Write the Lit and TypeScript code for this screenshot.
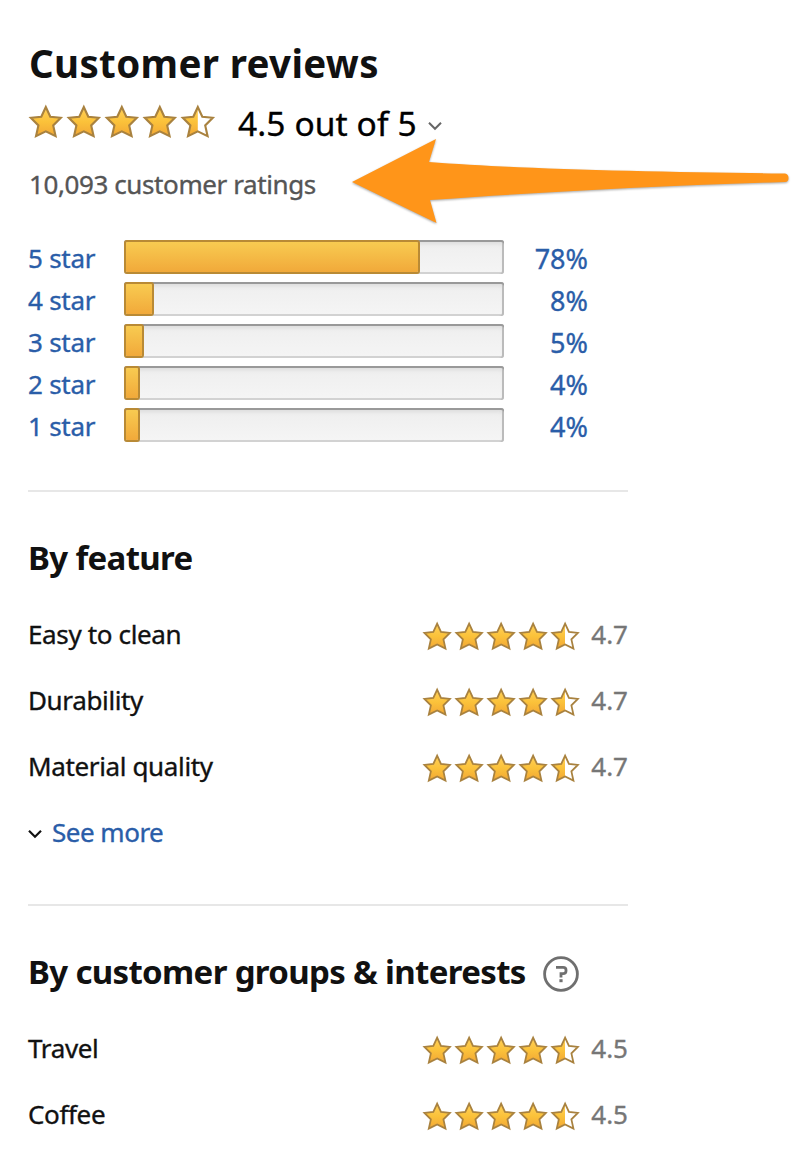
import { LitElement, html, css, svg } from "lit";
import { customElement, property } from "lit/decorators.js";

const STAR = "M17.8 2 L22.3 11.7 L32.8 12.8 L25.2 20.4 L27.6 31.2 L17.8 26.4 L8 31.2 L10.4 20.4 L2.8 12.8 L13.3 11.7 Z";

@customElement("star-rating")
class StarRating extends LitElement {
  @property({ type: Boolean }) large = false;

  static styles = css`
    :host { display: block; }
    svg { display: block; overflow: visible; }
  `;

  render() {
    const pitch = this.large ? 38 : 32;
    const scale = this.large ? 1 : 0.85;
    const size = 34 * scale;
    const width = pitch * 4 + size;
    return html`<svg width=${width} height=${size} viewBox="0 0 ${width} ${size}">
      <defs>
        <linearGradient id="gold" x1="0" y1="0" x2="0" y2="1">
          <stop offset="0" stop-color="#ffd05a" />
          <stop offset="0.5" stop-color="#fbc23a" />
          <stop offset="1" stop-color="#f2a735" />
        </linearGradient>
        <clipPath id="left"><rect x="0" y="0" width="17.8" height="34" /></clipPath>
      </defs>
      ${[0, 1, 2, 3, 4].map(
        (i) => svg`<g transform="translate(${i * pitch} 0) scale(${scale})">
          <path d=${STAR} fill="url(#gold)" clip-path=${i === 4 ? "url(#left)" : "none"} />
          <path d=${STAR} fill="none" stroke="#a9823f" stroke-width="2.1" />
        </g>`
      )}
    </svg>`;
  }
}

@customElement("app-root")
class AppRoot extends LitElement {
  static styles = css`
    :host {
      display: block;
      position: relative;
      height: 1158px;
      overflow: hidden;
      background: #fff;
      color: #111;
      font-family: "Noto Sans", "Open Sans", sans-serif;
      font-size: 26px;
      white-space: nowrap;
      -webkit-text-stroke: 0.35px currentColor;
    }
    .page { box-sizing: border-box; width: 628px; padding: 39px 0 0 28px; }
    h1, h2 { margin: 0; height: 48px; line-height: 48px; font-weight: 700; -webkit-text-stroke: 0; }
    h1 { font-size: 38.5px; letter-spacing: 0.35px; line-height: 49px; padding-left: 1px; }
    h2 { font-size: 33px; letter-spacing: -0.66px; line-height: 49px; }
    .overall { display: flex; align-items: center; height: 72px; }
    .overall star-rating { margin-top: -2px; }
    .score { margin-left: 24px; font-size: 33.5px; letter-spacing: 0.1px; color: #000; }
    .overall .chevron { margin: 5px 0 0 11px; color: #666; }
    .count { height: 48px; line-height: 50px; color: #555; letter-spacing: -0.4px; padding-left: 1px; }
    .histogram { display: grid; gap: 8px; margin-top: 33px; }
    .bar-row {
      display: grid;
      grid-template-columns: 96px 380px 84px;
      height: 34px;
      line-height: 36px;
      color: #2a5da8;
      letter-spacing: -0.25px;
    }
    .percent { text-align: right; letter-spacing: 0; font-size: 27px; line-height: 37px; }
    .track {
      box-sizing: border-box;
      height: 34px;
      border-radius: 3px;
      background: linear-gradient(#eee, #f5f5f5);
      box-shadow: inset 0 2px 0 #999, inset -2px 0 0 #bbb, inset 0 -2px 0 #d2d2d2, inset 0 4px 4px #ddd;
    }
    .fill {
      box-sizing: border-box;
      height: 34px;
      border: 2px solid #b98a35;
      border-radius: 3px;
      background: linear-gradient(#f8cb51, #f1a93a);
      background-clip: padding-box;
    }
    .divider { height: 2px; background: #e7e7e7; }
    .after-bars { margin-top: 48px; }
    .after-list { margin-top: 39px; }
    .section { margin-top: 41px; }
    .groups { display: flex; align-items: center; margin-top: 41px; }
    .help { margin: 6px 0 0 17px; }
    .list { margin-top: 20px; }
    .row { display: flex; align-items: center; height: 66px; line-height: 36px; }
    .label { flex: 1; letter-spacing: -0.36px; }
    .row star-rating { margin-top: 4px; }
    .value { width: 49px; text-align: right; color: #767676; }
    .more { gap: 10px; color: #2a5da8; letter-spacing: -0.5px; }
    .more .chevron { color: #111; margin-top: 4px; }
    svg { display: block; }
    .arrow { position: absolute; left: 340px; top: 130px; filter: drop-shadow(0 1.5px 1px rgba(0, 0, 0, 0.35)); }
  `;

  private chevron(width: number) {
    return html`<svg class="chevron" width="14" height="10" viewBox="0 0 14 10">
      <path d="M1 1.8 L7 7.8 L13 1.8" fill="none" stroke="currentColor" stroke-width=${width} />
    </svg>`;
  }

  private row(label: string, value: string) {
    return html`<div class="row">
      <span class="label">${label}</span><star-rating></star-rating><span class="value">${value}</span>
    </div>`;
  }

  render() {
    const bars = [[5, 78, 296], [4, 8, 30], [3, 5, 20], [2, 4, 16], [1, 4, 16]];
    return html`
      <div class="page">
        <h1><span>Customer reviews</span></h1>
        <div class="overall">
          <star-rating large></star-rating>
          <span class="score">4.5 out of 5</span>
          ${this.chevron(2)}
        </div>
        <div class="count"><span>10,093 customer ratings</span></div>
        <div class="histogram">
          ${bars.map(
            ([stars, percent, width]) => html`<div class="bar-row">
              <span>${stars} star</span>
              <div class="track"><div class="fill" style="width:${width}px"></div></div>
              <span class="percent">${percent}%</span>
            </div>`
          )}
        </div>
        <div class="divider after-bars"></div>
        <h2 class="section">By feature</h2>
        <div class="list">
          ${this.row("Easy to clean", "4.7")}
          ${this.row("Durability", "4.7")}
          ${this.row("Material quality", "4.7")}
          <div class="row more">${this.chevron(2.2)}<span>See more</span></div>
        </div>
        <div class="divider after-list"></div>
        <h2 class="groups">
          <span>By customer groups &amp; interests</span>
          <svg class="help" width="36" height="36" viewBox="0 0 36 36" fill="none" stroke="#6f6f6f">
            <circle cx="18" cy="18" r="16.4" stroke-width="2.8" />
            <path d="M13 11.4 H20 Q23 11.4 23 14 V15 Q23 17.6 20 17.6 H18 V21.4" stroke-width="2.8" />
            <path d="M18 23.2 V26.2" stroke-width="3.2" />
          </svg>
        </h2>
        <div class="list">
          ${this.row("Travel", "4.5")}
          ${this.row("Coffee", "4.5")}
        </div>
      </div>
      <svg class="arrow" width="466" height="100" viewBox="0 0 466 100">
        <path fill="#ff9519" d="M12 52 L96 9 L89 32 C180 39 310 42 445 43.5 Q448.500 44 448.500 48 Q448.500 52 445 52 C310 56 190 63 90 70 L96.500 93 Z" />
      </svg>
    `;
  }
}
